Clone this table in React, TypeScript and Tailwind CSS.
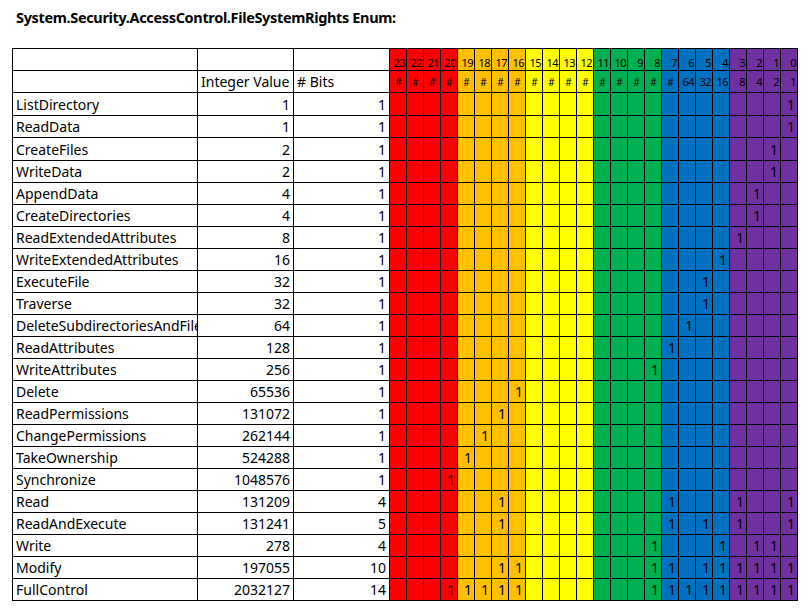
import React from 'react';

type Right = { name: string; value: number };

const rights: Right[] = [
  { name: 'ListDirectory', value: 1 },
  { name: 'ReadData', value: 1 },
  { name: 'CreateFiles', value: 2 },
  { name: 'WriteData', value: 2 },
  { name: 'AppendData', value: 4 },
  { name: 'CreateDirectories', value: 4 },
  { name: 'ReadExtendedAttributes', value: 8 },
  { name: 'WriteExtendedAttributes', value: 16 },
  { name: 'ExecuteFile', value: 32 },
  { name: 'Traverse', value: 32 },
  { name: 'DeleteSubdirectoriesAndFiles', value: 64 },
  { name: 'ReadAttributes', value: 128 },
  { name: 'WriteAttributes', value: 256 },
  { name: 'Delete', value: 65536 },
  { name: 'ReadPermissions', value: 131072 },
  { name: 'ChangePermissions', value: 262144 },
  { name: 'TakeOwnership', value: 524288 },
  { name: 'Synchronize', value: 1048576 },
  { name: 'Read', value: 131209 },
  { name: 'ReadAndExecute', value: 131241 },
  { name: 'Write', value: 278 },
  { name: 'Modify', value: 197055 },
  { name: 'FullControl', value: 2032127 },
];

// bit 23 down to 0
const bits = Array.from({ length: 24 }, (_, i) => 23 - i);

const bitColor = (bit: number) => {
  if (bit >= 20) return 'bg-[#ff0000]';
  if (bit >= 16) return 'bg-[#ffc000]';
  if (bit >= 12) return 'bg-[#ffff00]';
  if (bit >= 8) return 'bg-[#00b050]';
  if (bit >= 4) return 'bg-[#0070c0]';
  return 'bg-[#7030a0]';
};

const bitLabel = (bit: number) => (bit <= 6 ? String(1 << bit) : '#');

const countBits = (n: number) => n.toString(2).split('').filter((c) => c === '1').length;

const rowClass = 'grid grid-cols-[184px_95px_95px_repeat(24,16px)] gap-px';

// a couple of rows are one pixel taller in the sheet
const rowHeight = (i: number) => (i === 0 || i === 2 ? 'h-[22px]' : 'h-[21px]');

export default function App() {
  return (
    <div className="min-h-screen bg-white text-black" style={{ fontFamily: '"Noto Sans", "Open Sans", sans-serif' }}>
      <h1 className="pl-4 pt-[7px] text-[14.5px] font-bold leading-5 tracking-[-0.35px]">
        System.Security.AccessControl.FileSystemRights Enum:
      </h1>

      <div className="ml-3 mt-[21px] inline-flex flex-col gap-px bg-black p-px">
        {/* bit numbers */}
        <div className={`${rowClass} h-[21px]`}>
          <div className="bg-white" />
          <div className="bg-white" />
          <div className="bg-white" />
          {bits.map((b) => (
            <div key={b} className={`${bitColor(b)} flex items-end justify-end pr-px pb-[2px] text-[11px] leading-none tracking-[-0.5px]`}>
              {b}
            </div>
          ))}
        </div>

        {/* column titles */}
        <div className={`${rowClass} h-[21px]`}>
          <div className="bg-white" />
          <div className="flex items-center bg-white pl-[3px] text-[14px]">Integer Value</div>
          <div className="flex items-center bg-white pl-[3px] text-[14px]"># Bits</div>
          {bits.map((b) =>
            b > 6 ? (
              <div key={b} className={`${bitColor(b)} flex items-center justify-center pl-px text-[10px] leading-none`}>
                #
              </div>
            ) : (
              <div key={b} className={`${bitColor(b)} flex items-center justify-end pr-px text-[11px] leading-none tracking-[-0.5px]`}>
                {bitLabel(b)}
              </div>
            )
          )}
        </div>

        {rights.map((r, i) => (
          <div key={r.name} className={`${rowClass} ${rowHeight(i)} text-[14px]`}>
            <div className="flex items-center overflow-hidden whitespace-nowrap bg-white pl-[3px]">{r.name}</div>
            <div className="flex items-center justify-end bg-white pr-[3px]">{r.value}</div>
            <div className="flex items-center justify-end bg-white pr-[3px]">{countBits(r.value)}</div>
            {bits.map((b) => (
              <div key={b} className={`${bitColor(b)} flex items-center justify-end pr-[2px]`}>
                {(r.value >> b) & 1 ? '1' : ''}
              </div>
            ))}
          </div>
        ))}
      </div>
    </div>
  );
}
